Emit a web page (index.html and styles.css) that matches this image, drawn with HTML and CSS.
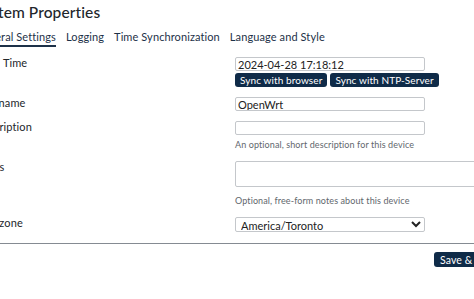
FILE: index.html
```html
<!DOCTYPE html>
<html lang="en">
<head>
  <meta charset="UTF-8">
  <title>System Properties</title>
  <link rel="stylesheet" href="styles.css">
</head>
<body>
  <div class="page">
    <h1>System Properties</h1>
    <div class="tabs">
      <span class="tab active">General Settings</span>
      <span class="tab">Logging</span>
      <span class="tab">Time Synchronization</span>
      <span class="tab">Language and Style</span>
    </div>

    <div class="form">
      <label>Local Time</label>
      <div class="field">
        <input type="text" class="input" value="2024-04-28 17:18:12">
        <div class="buttons">
          <button class="btn">Sync with browser</button>
          <button class="btn">Sync with NTP-Server</button>
        </div>
      </div>

      <label>Hostname</label>
      <div class="field">
        <input type="text" class="input" value="OpenWrt">
      </div>

      <label>Description</label>
      <div class="field">
        <input type="text" class="input">
        <div class="help">An optional, short description for this device</div>
      </div>

      <label>Notes</label>
      <div class="field">
        <textarea class="notes"></textarea>
        <div class="help">Optional, free-form notes about this device</div>
      </div>

      <label>Timezone</label>
      <div class="field">
        <select class="input select">
          <option>America/Toronto</option>
        </select>
      </div>
    </div>

    <div class="actions">
      <button class="btn save">Save &amp; Apply</button>
    </div>
  </div>
</body>
</html>
```

FILE: styles.css
```css
body {
  margin: 0;
  font-family: Lato, 'Noto Sans', sans-serif;
  color: #22262b;
  background: #fff;
  overflow: hidden;
}

.page {
  width: 533px;
  margin-left: -25px;
}

h1 {
  font-size: 15.5px;
  font-weight: 500;
  margin: 0;
  padding-top: 3px;
  line-height: 18px;
  letter-spacing: 0.1px;
}

.tabs {
  display: flex;
  gap: 10px;
  margin-top: 9px;
  font-size: 11px;
  color: #1d3148;
  letter-spacing: 0.1px;
}

.tab {
  padding-bottom: 2px;
  line-height: 13px;
}

.tab.active {
  border-bottom: 2px solid #1d3148;
}

.form {
  display: grid;
  grid-template-columns: 260px 1fr;
  row-gap: 10px;
  margin-top: 10px;
  font-size: 11px;
  letter-spacing: 0.1px;
}

.form label {
  line-height: 12px;
}

.field {
  display: flex;
  flex-direction: column;
  align-items: flex-start;
}

.input {
  width: 190px;
  height: 14px;
  box-sizing: border-box;
  border: 1px solid #c4c7cb;
  border-radius: 2px;
  padding: 0 2px;
  font: inherit;
  font-size: 11px;
  color: #222;
  background: #fff;
}

.select {
  height: 15px;
  padding: 0 1px;
}

.buttons {
  display: flex;
  gap: 3px;
  margin-top: 2px;
}

.btn {
  height: 14px;
  border: none;
  border-radius: 3px;
  background: #0f2b48;
  color: #fff;
  font: inherit;
  font-size: 10px;
  line-height: 14px;
  padding: 0 5px;
  letter-spacing: 0.1px;
}

.help {
  margin-top: 4px;
  font-size: 9px;
  line-height: 12px;
  color: #62676d;
  letter-spacing: 0.1px;
}

.notes {
  width: 100%;
  height: 26px;
  box-sizing: border-box;
  border: 1px solid #c4c7cb;
  border-radius: 2px;
  resize: none;
  margin: 0 0 4px;
}

.actions {
  border-top: 1px solid #858b92;
  margin-top: 11px;
  padding-top: 8px;
  display: flex;
  justify-content: flex-end;
}

.save {
  height: 15px;
  font-size: 10.5px;
  padding: 0 6px;
}
```
